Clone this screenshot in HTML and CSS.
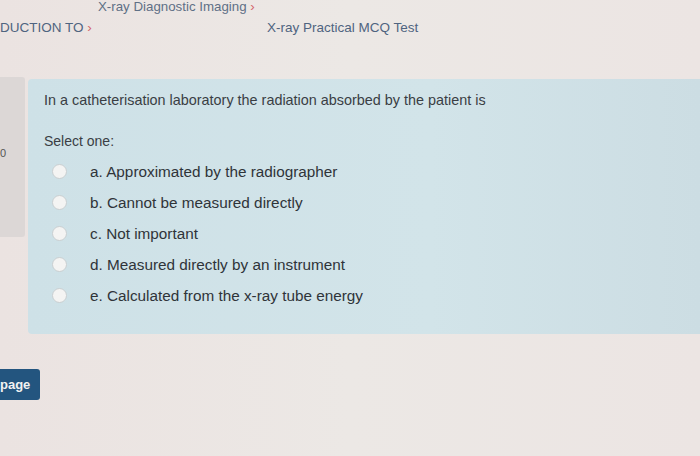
FILE: index.html
```html
<!DOCTYPE html>
<html>
<head>
<meta charset="utf-8">
<link rel="stylesheet" href="styles.css">
</head>
<body>
<div class="page">
  <div class="crumb-top">X-ray Diagnostic Imaging <span class="chev">›</span></div>
  <div class="crumb-row">
    <span class="crumb-left">DUCTION TO <span class="chev">›</span></span>
    <span class="crumb-right">X-ray Practical MCQ Test</span>
  </div>
  <div class="main">
    <div class="side"><span class="side-num">0</span></div>
    <div class="card">
      <div class="question">In a catheterisation laboratory the radiation absorbed by the patient is</div>
      <div class="prompt">Select one:</div>
      <div class="options">
        <div class="opt"><span class="radio"></span><span class="label">a. Approximated by the radiographer</span></div>
        <div class="opt"><span class="radio"></span><span class="label">b. Cannot be measured directly</span></div>
        <div class="opt"><span class="radio"></span><span class="label">c. Not important</span></div>
        <div class="opt"><span class="radio"></span><span class="label">d. Measured directly by an instrument</span></div>
        <div class="opt"><span class="radio"></span><span class="label">e. Calculated from the x-ray tube energy</span></div>
      </div>
    </div>
  </div>
  <div class="btn-row"><span class="btn">page</span></div>
</div>
</body>
</html>
```
FILE: styles.css
```css
html, body {
  margin: 0;
  padding: 0;
}
body {
  width: 700px;
  height: 456px;
  overflow: hidden;
  background: linear-gradient(90deg, #ebe3e1 0%, #ece8e5 50%, #ece5e3 100%);
  font-family: "Liberation Sans", Arial, sans-serif;
}
.page {
  display: flex;
  flex-direction: column;
}
.crumb-top {
  padding-left: 98px;
  font-size: 13.3px;
  line-height: 13px;
  color: #5f7086;
}
.chev {
  color: #d4656c;
}
.crumb-row {
  display: flex;
  margin-top: 7px;
  font-size: 13.5px;
  line-height: 15px;
  color: #4f6480;
}
.crumb-left {
  width: 267px;
}
.main {
  display: flex;
  margin-top: 42px;
  height: 257px;
}
.side {
  width: 25px;
  height: 160px;
  background: #dcd7d6;
  border-radius: 0 3px 3px 0;
  display: flex;
  align-items: center;
  font-size: 11px;
  color: #555;
}
.side-num {
  margin-top: -9px;
}
.card {
  margin-left: 3px;
  margin-top: 2px;
  flex: 1;
  height: 255px;
  background: linear-gradient(90deg, #cee1e7 0%, #d2e4e9 60%, #ccdde3 100%);
  border-radius: 4px 0 0 4px;
  padding: 13px 0 0 16px;
  box-sizing: border-box;
}
.question {
  font-size: 14.4px;
  line-height: 16px;
  color: #3a3e44;
}
.prompt {
  margin-top: 25px;
  font-size: 14px;
  line-height: 16px;
  color: #3a3e44;
}
.options {
  display: flex;
  flex-direction: column;
  margin-top: 7px;
}
.opt {
  display: flex;
  align-items: center;
  height: 31px;
}
.radio {
  width: 15px;
  height: 15px;
  border-radius: 50%;
  background: #f4f4f3;
  border: 1px solid #c9cfd1;
  box-sizing: border-box;
  margin-left: 8px;
}
.label {
  margin-left: 23px;
  font-size: 15.3px;
  color: #2f3439;
}
.btn-row {
  display: flex;
  margin-top: 35px;
}
.btn {
  width: 40px;
  height: 31px;
  box-sizing: border-box;
  background: #23557f;
  border-radius: 0 3px 3px 0;
  color: #f2f2f2;
  font-weight: bold;
  font-size: 13px;
  line-height: 31px;
}
```
